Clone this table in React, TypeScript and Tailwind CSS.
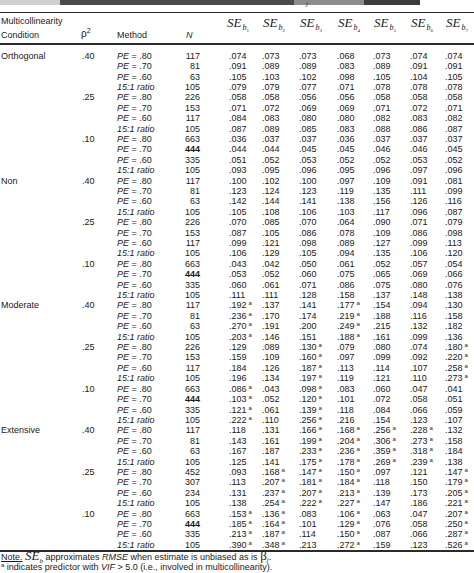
import React from "react";

const COLS =
  "grid grid-cols-[80px_37px_58px_25px_29px_33px_37px_38px_36px_37px_35px_29px]";

const blocks: { cond: string; ns: string[][] }[] = [
  { cond: "Orthogonal", ns: [["117", "81", "63", "105"], ["226", "153", "117", "105"], ["663", "444", "335", "105"]] },
  { cond: "Non", ns: [["117", "81", "63", "105"], ["226", "153", "117", "105"], ["663", "444", "335", "105"]] },
  { cond: "Moderate", ns: [["117", "81", "63", "105"], ["226", "153", "117", "105"], ["663", "444", "335", "105"]] },
  { cond: "Extensive", ns: [["117", "81", "63", "105"], ["452", "307", "234", "105"], ["663", "444", "335", "105"]] },
];

const rhos = [".40", ".25", ".10"];
const methods = ["PE = .80", "PE = .70", "PE = .60", "15:1 ratio"];

const values: string[] = [
  ".074 .073 .073 .068 .073 .074 .074",
  ".091 .089 .089 .083 .089 .091 .091",
  ".105 .103 .102 .098 .105 .104 .105",
  ".079 .079 .077 .071 .078 .078 .078",
  ".058 .058 .056 .056 .058 .058 .058",
  ".071 .072 .069 .069 .071 .072 .071",
  ".084 .083 .080 .080 .082 .083 .082",
  ".087 .089 .085 .083 .088 .086 .087",
  ".036 .037 .037 .036 .037 .037 .037",
  ".044 .044 .045 .045 .046 .046 .045",
  ".051 .052 .053 .052 .052 .053 .052",
  ".093 .095 .096 .095 .096 .097 .096",
  ".100 .102 .100 .097 .109 .091 .081",
  ".123 .124 .123 .119 .135 .111 .099",
  ".142 .144 .141 .138 .156 .126 .116",
  ".105 .108 .106 .103 .117 .096 .087",
  ".070 .085 .070 .064 .090 .071 .079",
  ".087 .105 .086 .078 .109 .086 .098",
  ".099 .121 .098 .089 .127 .099 .113",
  ".106 .129 .105 .094 .135 .106 .120",
  ".043 .042 .050 .061 .052 .057 .054",
  ".053 .052 .060 .075 .065 .069 .066",
  ".060 .061 .071 .086 .075 .080 .076",
  ".111 .111 .128 .158 .137 .148 .138",
  ".192a .137 .141 .177a .154 .094 .130",
  ".236a .170 .174 .219a .188 .116 .158",
  ".270a .191 .200 .249a .215 .132 .182",
  ".203a .146 .151 .188a .161 .099 .136",
  ".129 .089 .130a .079 .080 .074 .180a",
  ".159 .109 .160a .097 .099 .092 .220a",
  ".184 .126 .187a .113 .114 .107 .258a",
  ".196 .134 .197a .119 .121 .110 .273a",
  ".086a .043 .098a .083 .060 .047 .041",
  ".103a .052 .120a .101 .072 .058 .051",
  ".121a .061 .139a .118 .084 .066 .059",
  ".222a .110 .256a .216 .154 .123 .107",
  ".118 .131 .166a .168a .256a .228a .132",
  ".143 .161 .199a .204a .306a .273a .158",
  ".167 .187 .233a .236a .359a .318a .184",
  ".125 .141 .175a .178a .269a .239a .138",
  ".093 .168a .147a .150a .097 .121 .147a",
  ".113 .207a .181a .184a .118 .150 .179a",
  ".131 .237a .207a .213a .139 .173 .205a",
  ".138 .254a .222a .227a .147 .186 .221a",
  ".153a .136a .083 .106a .063 .047 .207a",
  ".185a .164a .101 .129a .076 .058 .250a",
  ".213a .187a .114 .150a .087 .066 .287a",
  ".390a .348a .213 .272a .159 .123 .526a",
];

function Val({ s }: { s: string }) {
  const a = s.endsWith("a");
  const num = a ? s.slice(0, -1) : s;
  return (
    <span className="whitespace-nowrap">
      {num}
      {a && <sup className="text-[6px] ml-[2px] top-[-3px]">a</sup>}
    </span>
  );
}

function Method({ m }: { m: string }) {
  if (m.startsWith("PE")) {
    return (
      <span className="whitespace-nowrap">
        <span className="italic">PE</span>
        {m.slice(2)}
      </span>
    );
  }
  return <span className="italic whitespace-nowrap">{m}</span>;
}

function SEHead({ n }: { n: number }) {
  return (
    <span className="font-['Liberation_Serif',serif] italic text-[13px] leading-[14px] whitespace-nowrap text-[#1a1a1a]">
      SE
      <span className="text-[8px] relative top-[3px] ml-[1px]">
        b<span className="text-[5px] relative top-[2px] not-italic">{n}</span>
      </span>
    </span>
  );
}

export default function App() {
  const rows: React.ReactNode[] = [];
  let idx = 0;
  blocks.forEach((b) => {
    b.ns.forEach((group, gi) => {
      group.forEach((n, mi) => {
        const vals = values[idx].split(" ");
        rows.push(
          <React.Fragment key={idx}>
            <div className="pl-[1px] whitespace-nowrap">{gi === 0 && mi === 0 ? b.cond : ""}</div>
            <div className="pl-[2px]">{mi === 0 ? rhos[gi] : ""}</div>
            <div>
              <Method m={methods[mi]} />
            </div>
            <div className={"text-right " + (n === "444" ? "font-bold" : "")}>{n}</div>
            <div />
            {vals.map((v, i) => (
              <div key={i}>
                <Val s={v} />
              </div>
            ))}
          </React.Fragment>
        );
        idx++;
      });
    });
  });

  return (
    <div className="w-[474px] h-[573px] overflow-hidden bg-white text-[#1a1a1a] font-['Liberation_Sans',Arial,sans-serif] text-[9px] flex flex-col">
      {/* clipped remnant of the title line */}
      <div className="flex h-[5px] shrink-0">
        <div className="w-[60px] bg-[#cfcfcf]" />
        <div className="w-[234px] bg-[#4a4a4a]" />
        <div className="w-[70px] bg-[#8c8c8c] pl-[12px]">
          <span className="font-['Liberation_Serif',serif] italic text-[7px] leading-[9px] text-[#222] block">j</span>
        </div>
        <div className="w-[56px] bg-[#3c3c3c]" />
      </div>
      <div className="h-[7px] shrink-0" />
      <div className="h-[1px] bg-[#2a2a2a] shrink-0" />

      {/* header */}
      <div className={COLS + " h-[30px] shrink-0"}>
        <div className="pl-[1px] pt-[3px] flex flex-col gap-[4px] leading-[10px]">
          <span>Multicollinearity</span>
          <span>Condition</span>
        </div>
        <div className="pl-[1px] pt-[15px] leading-[12px] text-[10px]">
          ρ<sup className="text-[7px] top-[-4px]">2</sup>
        </div>
        <div className="pt-[17px] leading-[10px]">Method</div>
        <div className="pt-[17px] leading-[10px] pl-[11px] italic">N</div>
        <div />
        {[1, 2, 3, 4, 5, 6, 7].map((n) => (
          <div key={n} className={"pt-[3px] " + (n === 1 ? "ml-[-2px]" : "ml-[1px]")}>
            <SEHead n={n} />
          </div>
        ))}
      </div>
      <div className="h-[1.5px] bg-[#2a2a2a] shrink-0" />

      {/* body */}
      <div className={COLS + " auto-rows-[10.42px] items-center leading-[10px] pt-[6px] shrink-0"}>
        {rows}
      </div>
      <div className="h-[2px] bg-[#2a2a2a] shrink-0" />

      {/* notes */}
      <div className="pl-[1px] h-[10px] leading-[10px] whitespace-nowrap shrink-0 overflow-visible">
        <span className="underline">Note.</span>{" "}
        <span className="font-['Liberation_Serif',serif] italic text-[13px] leading-[0px]">
          SE<span className="text-[7px] relative top-[3px]">b</span>
        </span>{" "}
        approximates <span className="italic">RMSE</span> when estimate is unbiased as is{" "}
        <span className="font-['Liberation_Serif',serif] text-[13px] leading-[0px]">
          β<span className="italic text-[7px] relative top-[2px]">j</span>
        </span>
        .
      </div>
      <div className="pl-[1px] h-[10px] leading-[10px] whitespace-nowrap shrink-0">
        <sup className="text-[6px] top-[-3px]">a</sup> indicates predictor with <span className="italic">VIF</span> &gt; 5.0 (i.e., involved in multicollinearity).
      </div>
    </div>
  );
}
